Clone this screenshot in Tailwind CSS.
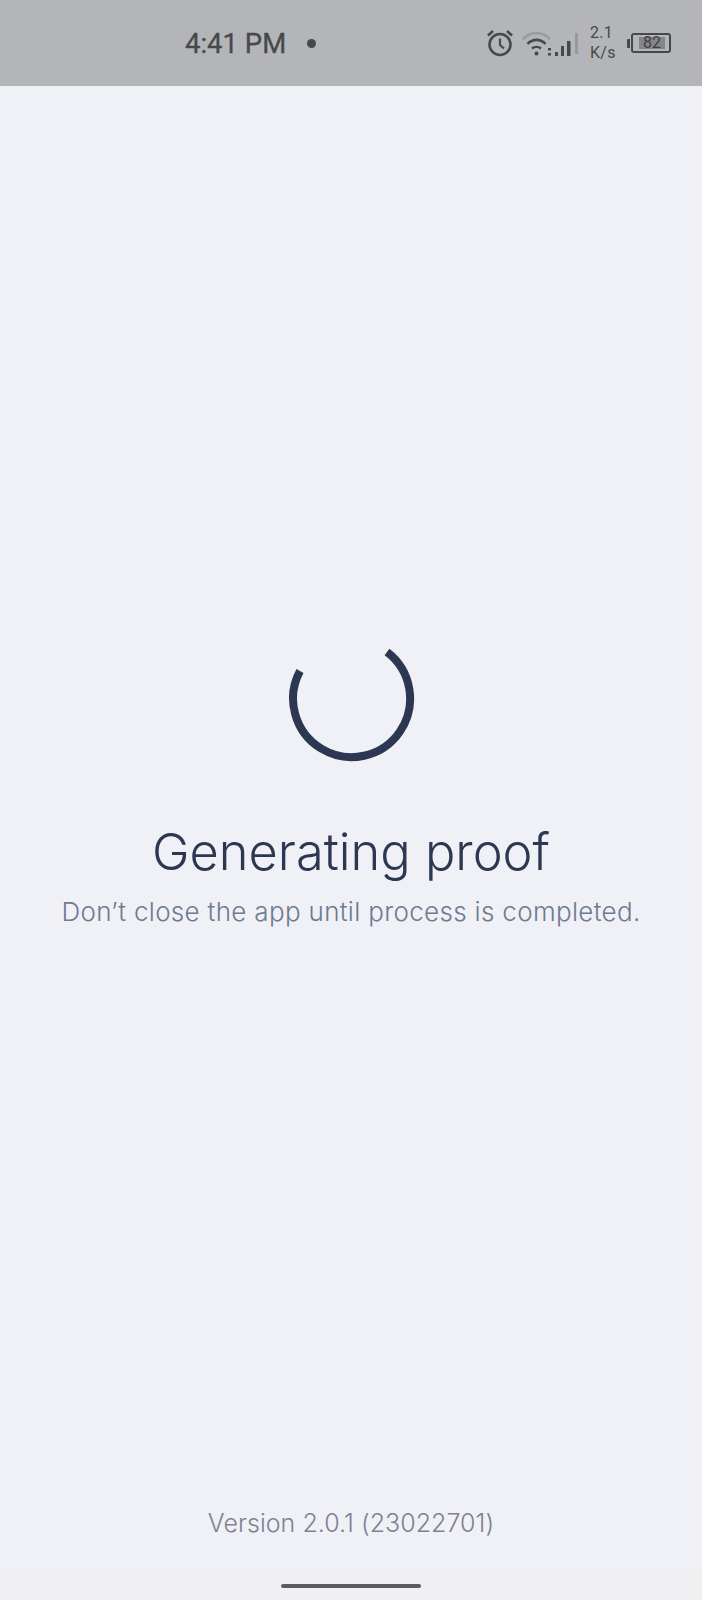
<!DOCTYPE html>
<html>
<head>
<meta charset="utf-8">
<script src="https://cdn.jsdelivr.net/npm/@tailwindcss/browser@4"></script>
</head>
<body class="m-0">
<div class="w-[702px] h-[1600px] flex flex-col bg-[#f0f1f6] font-['Inter','Lato',sans-serif] overflow-hidden">
  <header class="h-[86px] shrink-0 bg-[#b4b5b8] flex items-center text-[#47484b] font-['Roboto',sans-serif]">
    <div class="ml-[185px] w-[100px] pt-[2px] text-[27.5px] leading-none font-normal whitespace-nowrap [-webkit-text-stroke:0.3px_#47484b]">4:41 PM</div>
    <div class="ml-[22px] w-[9px] h-[9px] rounded-full bg-[#47484b]"></div>
    <div class="ml-[170px] flex items-center">
      <svg width="28" height="30" viewBox="0 0 28 30" fill="none" stroke="#47484b" stroke-width="2.6"><circle cx="14" cy="16.5" r="10.5"/><path d="M14 10.5V17l4 3.5" stroke-width="2.2"/><path d="M2 7.5 7 3M26 7.5 21 3" stroke-width="2.6"/></svg>
      <svg class="ml-[8px]" width="50" height="28" viewBox="0 0 50 28" fill="none"><path d="M1 10.5C8 2 21 2 28 10.5" stroke="#9b9c9f" stroke-width="2.6"/><path d="M5.5 15C10.5 9.5 18.5 9.5 23.5 15" stroke="#47484b" stroke-width="2.6"/><path d="M10 19.5c2.5-2.2 6.500-2.200 9 0" stroke="#47484b" stroke-width="2.400"/><circle cx="14.500" cy="24.500" r="2" fill="#47484b"/><rect x="26" y="19" width="3" height="2.500" fill="#47484b"/><rect x="26" y="24" width="3" height="2.500" fill="#47484b"/><rect x="33" y="23" width="3" height="4" fill="#47484b"/><rect x="39" y="17" width="3" height="10" fill="#47484b"/><rect x="45" y="12" width="3.500" height="15" fill="#47484b"/></svg>
      <div class="ml-[3px] w-[3px] h-[21px] bg-[#98999c]"></div>
      <div class="ml-[12px] w-[28px] text-[16px] leading-[20px] font-normal tracking-[0.3px]"><div>2.1</div><div>K/s</div></div>
      <div class="ml-[9px] flex items-center">
        <div class="w-[3px] h-[9px] bg-[#47484b] rounded-l-[1px]"></div>
        <div class="ml-[1px] w-[40px] h-[20px] border-2 border-[#47484b] rounded-[3px] p-[2px] flex">
          <div class="w-[26px] h-full bg-[#85868a] text-[16px] leading-[12px] text-center text-[#3f4043] whitespace-nowrap flex items-center justify-center ml-[4px]">82</div>
        </div>
      </div>
    </div>
  </header>
  <main class="flex-1 flex flex-col items-center">
    <svg class="mt-[549px]" width="128" height="128" viewBox="0 0 128 128" fill="none"><path d="M100 17A58.500 58.500 0 1 1 13 36" stroke="#2c3752" stroke-width="8"/></svg>
    <h1 class="mt-[59px] text-[50.5px] leading-[60px] font-light text-[#2c3752] whitespace-nowrap">Generating proof</h1>
    <p class="mt-[12px] text-[26px] leading-[36px] tracking-[0.32px] font-light text-[#6e7a90] whitespace-nowrap">Don’t close the app until process is completed.</p>
    <p class="mt-auto mb-[27px] text-[25px] leading-[36px] tracking-[0.03px] font-light text-[#7f8092] whitespace-nowrap">Version 2.0.1 (23022701)</p>
  </main>
  <footer class="h-[32px] shrink-0 bg-[#f0f0f2] flex justify-center pt-[16px]">
    <div class="w-[140px] h-[4px] rounded-full bg-[#5c5c5e]"></div>
  </footer>
</div>
</body>
</html>
